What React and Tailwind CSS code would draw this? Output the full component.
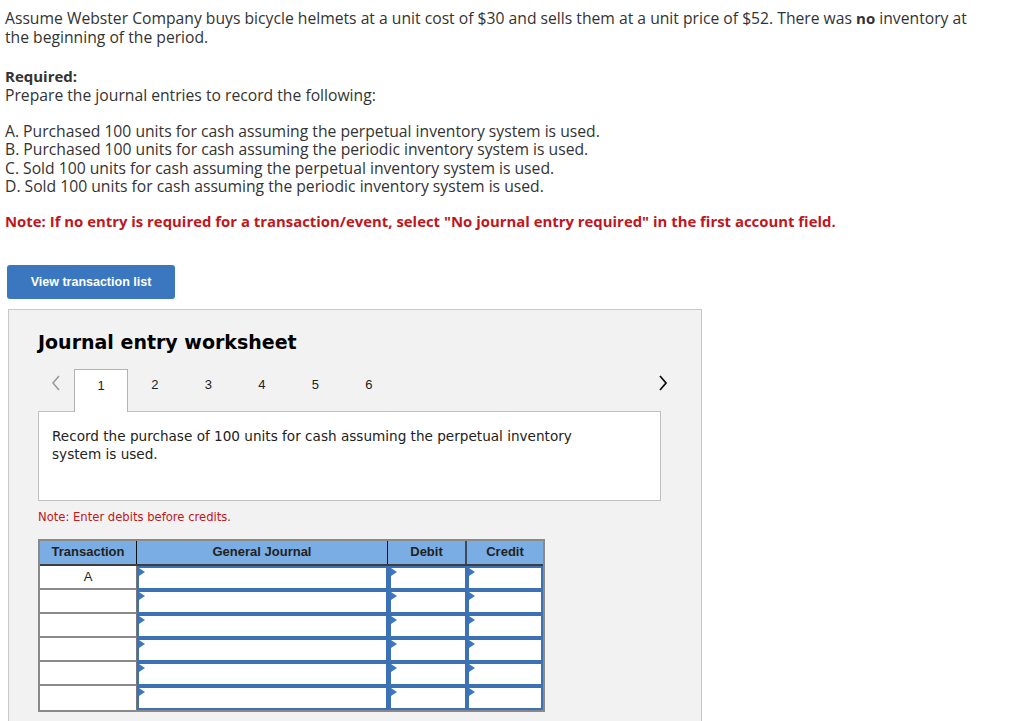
import React from "react";

function Marker() {
  return (
    <span className="absolute left-0 top-0 w-0 h-0 border-t-[4px] border-b-[4px] border-l-[6px] border-t-transparent border-b-transparent border-l-[#3a78c2]" />
  );
}

function InputCell({ w }) {
  return (
    <div className={`relative h-full bg-white border-2 border-[#3c72b5] ${w}`}>
      <Marker />
    </div>
  );
}

export default function App() {
  const rows = ["A", "", "", "", "", ""];
  return (
    <div className="bg-white min-h-[721px] text-[#333] font-['Open_Sans',sans-serif]">
      <div className="pl-[5px] pt-[9px] text-[15.7px] leading-[19px]">
        <p>
          Assume Webster Company buys bicycle helmets at a unit cost of $30 and sells them at a unit price of $52. There was <b className="font-bold text-[15px]">no</b> inventory at
          <br />
          the beginning of the period.
        </p>
        <p className="mt-[20px] font-bold text-[15px]">Required:</p>
        <p>Prepare the journal entries to record the following:</p>
        <div className="mt-[17px] leading-[18.4px]">
          <p>A. Purchased 100 units for cash assuming the perpetual inventory system is used.</p>
          <p>B. Purchased 100 units for cash assuming the periodic inventory system is used.</p>
          <p>C. Sold 100 units for cash assuming the perpetual inventory system is used.</p>
          <p>D. Sold 100 units for cash assuming the periodic inventory system is used.</p>
        </div>
        <p className="mt-[16px] font-bold text-[14.9px] text-[#c0161d]">
          Note: If no entry is required for a transaction/event, select "No journal entry required" in the first account field.
        </p>
      </div>
      <div className="pl-[7px] mt-[34px]">
        <button className="w-[168px] h-[34px] rounded-[3px] bg-[#3a77be] text-white font-bold text-[12.5px] pt-[1px] font-['Liberation_Sans',Arial,sans-serif]">
          View transaction list
        </button>
      </div>
      <div className="ml-[8px] mt-[10px] w-[694px] h-[413px] bg-[#f2f2f2] border border-[#c8c8c8] border-b-0 pl-[29px] font-['DejaVu_Sans',Verdana,sans-serif]">
        <h2 className="mt-[20px] text-[19px] leading-[24px] font-bold text-black">Journal entry worksheet</h2>
        <div className="mt-[15px] flex items-end h-[42px] w-[623px] relative">
          <div className="w-[36px] h-full flex items-start justify-center pt-[5px]">
            <svg width="12" height="18" viewBox="0 0 12 18">
              <polyline points="9,2 3,9 9,16" fill="none" stroke="#9a9a9a" strokeWidth="1.6" />
            </svg>
          </div>
          <div className="w-[54px] h-[43px] bg-white border border-b-0 border-[#b3b3b3] flex items-start pt-[6px] justify-center text-[13px] text-[#222] font-['Liberation_Sans',Arial,sans-serif] relative top-[1px] z-10">
            1
          </div>
          {["2", "3", "4", "5", "6"].map((n) => (
            <div key={n} className="w-[53.5px] h-full flex items-start pt-[6px] justify-center text-[13px] text-[#222] font-['Liberation_Sans',Arial,sans-serif]">
              {n}
            </div>
          ))}
          <div className="absolute right-[-8px] top-0 h-full flex items-start pt-[5px]">
            <svg width="12" height="18" viewBox="0 0 12 18">
              <polyline points="3,2 9,9 3,16" fill="none" stroke="#111" strokeWidth="1.8" />
            </svg>
          </div>
        </div>
        <div className="w-[623px] h-[90px] bg-white border border-[#c0c0c0] px-[13px] pt-[15px] text-[13.6px] leading-[18px] text-[#222]">
          Record the purchase of 100 units for cash assuming the perpetual inventory
          <br />
          system is used.
        </div>
        <p className="mt-[9px] text-[11.6px] leading-[14px] text-[#c0161d]">Note: Enter debits before credits.</p>
        <div className="mt-[15px] w-[507px] border-2 border-[#8a8a8a] bg-white font-['Liberation_Sans',Arial,sans-serif]">
          <div className="grid grid-cols-[97px_251px_79px_76px] h-[25px] bg-[#79ade3] border-b-2 border-[#3d3d3d] text-[13px] font-bold text-[#222]">
            <div className="flex items-center justify-center border-r border-[#111]">Transaction</div>
            <div className="flex items-center justify-center border-r border-[#111]">General Journal</div>
            <div className="flex items-center justify-center border-r-2 border-[#3d4a5a]">Debit</div>
            <div className="flex items-center justify-center">Credit</div>
          </div>
          {rows.map((r, i) => (
            <div key={i} className="grid grid-cols-[97px_251px_79px_76px] h-[24px]">
              <div className={`flex items-center justify-center text-[13px] text-[#222] border-r border-[#777] ${i < rows.length - 1 ? "border-b-2 border-b-[#8a8a8a]" : ""}`}>
                {r}
              </div>
              <InputCell w="" />
              <InputCell w="border-l-[3px]" />
              <InputCell w="" />
            </div>
          ))}
        </div>
      </div>
    </div>
  );
}
